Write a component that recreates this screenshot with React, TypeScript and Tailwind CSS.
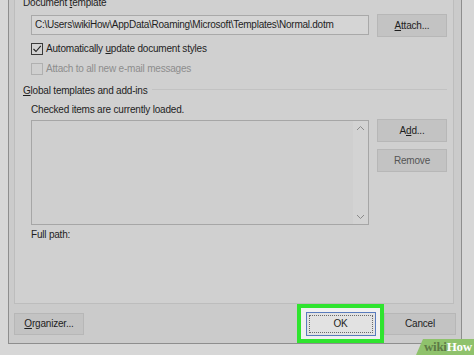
import React from "react";

function Btn({ children, className = "" }: { children: React.ReactNode; className?: string }) {
  return (
    <div
      className={
        "flex items-center justify-center bg-[#c3c3c3] border border-[#b7b7b7] text-[#1e1e1e] " + className
      }
    >
      {children}
    </div>
  );
}

export default function App() {
  return (
    <div className="relative w-[474px] h-[355px] overflow-hidden bg-[#d7d7d7] font-['Liberation_Sans',Arial,sans-serif] text-[10px] tracking-[-0.2px] text-[#1e1e1e] leading-[12px]">
      <div className="ml-[8px] w-[454px] h-[344px] border-x border-b border-[#8e8e8e] bg-[#cbcbcb] flex flex-col">
        {/* inner panel */}
        <div className="ml-[5px] mr-[7px] h-[306px] border-x border-b border-[#bdbdbd] bg-[#d0d0d0] pl-[8px] pr-[6px] flex flex-col">
          <div className="h-[12px] -mt-[3px]">
            Document <u className="underline-offset-1">t</u>emplate
          </div>
          <div className="mt-[5px] flex items-start">
            <div className="ml-[8px] mt-[1px] w-[338px] h-[20px] border border-[#a9a9a9] bg-[#d5d5d5] px-[3px] flex items-center tracking-[-0.25px]">
              C:\Users\wikiHow\AppData\Roaming\Microsoft\Templates\Normal.dotm
            </div>
            <Btn className="ml-[8px] w-[70px] h-[23px]">
              <span>
                <u className="underline-offset-1">A</u>ttach...
              </span>
            </Btn>
          </div>
          <div className="mt-[6px] ml-[8px] h-[12px] flex items-center">
            <div className="w-[12px] h-[12px] border border-[#3a3a3a] bg-[#d2d2d2] flex items-center justify-center">
              <svg width="10" height="10" viewBox="0 0 10 10">
                <polyline points="1.5,5 4,7.5 8.8,1.8" fill="none" stroke="#222" strokeWidth="1.1" />
              </svg>
            </div>
            <span className="ml-[3px]">
              Automatically <u className="underline-offset-1">u</u>pdate document styles
            </span>
          </div>
          <div className="mt-[8px] ml-[8px] h-[12px] flex items-center">
            <div className="w-[12px] h-[12px] border border-[#b0b0b0] bg-[#cfcfcf]" />
            <span className="ml-[3px] text-[#8d8d8d]">Attach to all new e-mail messages</span>
          </div>
          <div className="mt-[10px] h-[12px] flex items-start">
            <span>
              <u className="underline-offset-1">G</u>lobal templates and add-ins
            </span>
            <div className="flex-1 ml-[4px] mt-[4px] h-px bg-[#c2c2c2]" />
          </div>
          <div className="mt-[7px] ml-[8px] h-[12px]">Checked items are currently loaded.</div>
          <div className="mt-[4px] flex items-start">
            <div className="ml-[8px] w-[338px] h-[105px] border border-[#a6a6a6] bg-[#cfcfcf] flex justify-end">
              <div className="w-[15px] h-full bg-[#d3d3d3] flex flex-col items-center justify-between py-[4px]">
                <svg width="9" height="6" viewBox="0 0 9 6">
                  <polyline points="1,5 4.5,1.5 8,5" fill="none" stroke="#8a8a8a" strokeWidth="1" />
                </svg>
                <svg width="9" height="6" viewBox="0 0 9 6">
                  <polyline points="1,1 4.5,4.5 8,1" fill="none" stroke="#8a8a8a" strokeWidth="1" />
                </svg>
              </div>
            </div>
            <div className="ml-[8px] -mt-[1px] flex flex-col">
              <Btn className="w-[70px] h-[23px]">
                <span>
                  A<u className="underline-offset-1">d</u>d...
                </span>
              </Btn>
              <Btn className="mt-[7px] w-[70px] h-[23px] text-[#555]">Remove</Btn>
            </div>
          </div>
          <div className="mt-[4px] ml-[8px] h-[12px]">Full path:</div>
        </div>
        {/* bottom button row */}
        <div className="flex-1 flex items-start pt-[9px] pl-[5px] pr-[5px]">
          <Btn className="w-[70px] h-[22px]">
            <span>
              <u className="underline-offset-1">O</u>rganizer...
            </span>
          </Btn>
          <div className="flex-1" />
          <div className="-mt-[9px] w-[87px] h-[39px] border-[4px] border-[#2fe42f] bg-[#f0f0f0] flex items-center justify-center">
            <div className="relative w-[70px] h-[24px] border border-[#5a7cbd] bg-[#e2e2e2] flex items-center justify-center">
              <div className="absolute inset-[2px] border border-dotted border-[#6a6a6a]" />
              <span>OK</span>
            </div>
          </div>
          <Btn className="w-[72px] h-[22px]">Cancel</Btn>
        </div>
      </div>
      {/* wikiHow watermark */}
      <div className="absolute right-0 bottom-0 w-[60px] h-[16px]">
        <svg className="absolute inset-0" width="60" height="16" viewBox="0 0 60 16">
          <polygon points="9,0 60,0 60,16 2,16" fill="#8fc26c" />
        </svg>
        <span className="absolute left-[10px] top-[1px] font-['Liberation_Serif',serif] text-[13px] leading-[14px] font-bold tracking-[-0.3px] whitespace-nowrap">
          <span className="text-[#5d7a45]">wiki</span>
          <span className="text-white">How</span>
        </span>
      </div>
    </div>
  );
}
